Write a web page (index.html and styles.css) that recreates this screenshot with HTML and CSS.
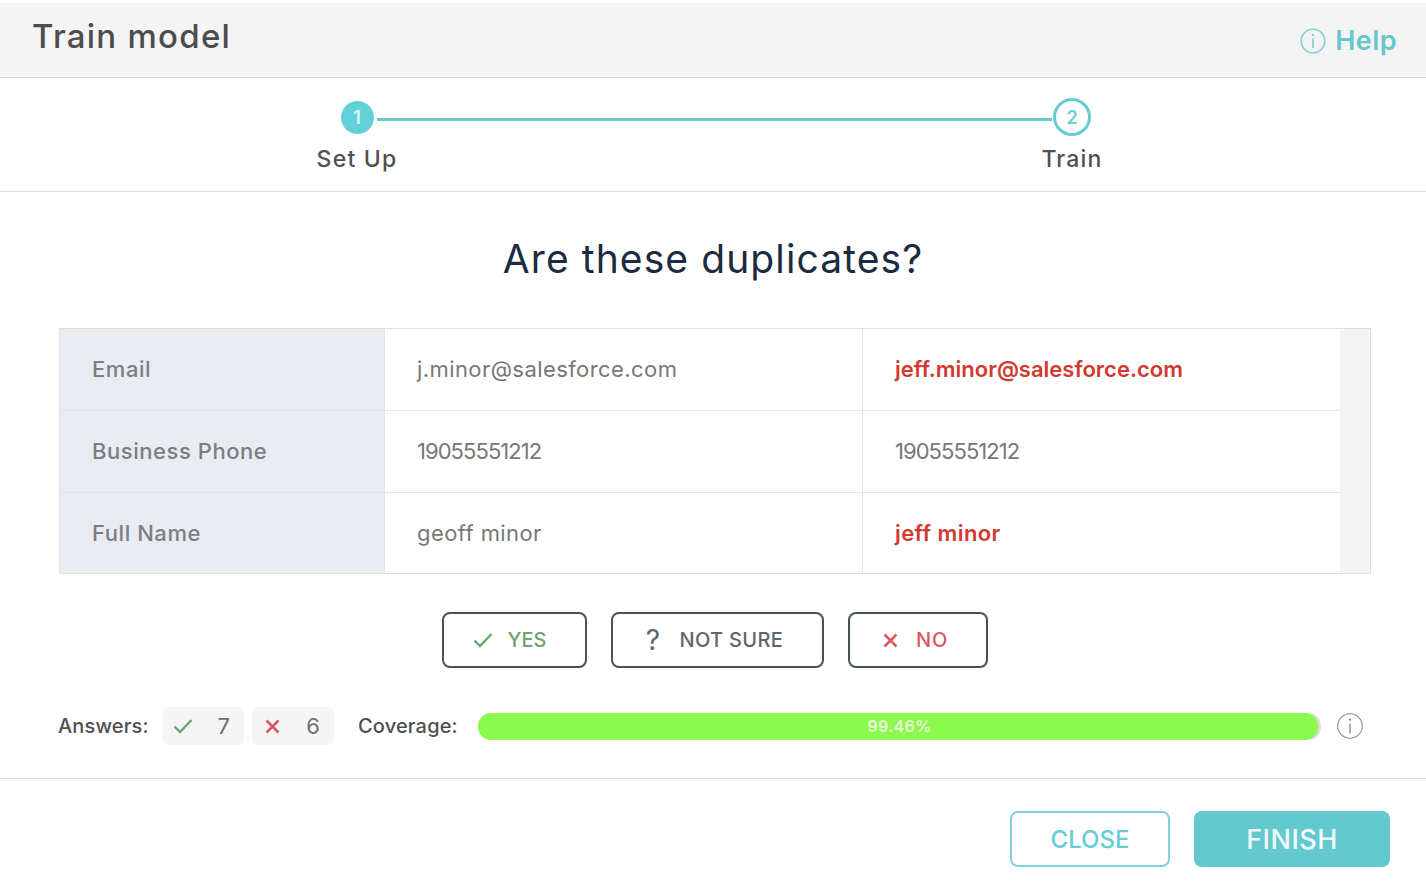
FILE: index.html
```html
<!DOCTYPE html>
<html lang="en">
<head>
<meta charset="utf-8">
<title>Train model</title>
<link rel="stylesheet" href="styles.css">
</head>
<body>
<div class="dialog">
  <header class="header">
    <h1 class="title">Train model</h1>
    <a class="help">
      <svg class="help-icon" viewBox="0 0 26 26" width="26" height="26" fill="none" stroke="#85d2d8" stroke-width="1.6"><circle cx="13" cy="13" r="11.8"/><path d="M13 10.5v9.5" stroke-width="1.8"/><circle cx="13" cy="7" r="1.3" fill="#85d2d8" stroke="none"/></svg>
      <span>Help</span>
    </a>
  </header>
  <section class="stepper">
    <div class="step">
      <div class="dot dot-done">1</div>
      <div class="step-label">Set Up</div>
    </div>
    <div class="step-line"></div>
    <div class="step">
      <div class="dot dot-current">2</div>
      <div class="step-label">Train</div>
    </div>
  </section>
  <h2 class="question">Are these duplicates?</h2>
  <section class="compare">
    <div class="cell head">Email</div>
    <div class="cell">j.minor@salesforce.com</div>
    <div class="cell diff tight">jeff.minor@salesforce.com</div>
    <div class="cell head">Business Phone</div>
    <div class="cell digits">19055551212</div>
    <div class="cell digits">19055551212</div>
    <div class="cell head last">Full Name</div>
    <div class="cell last">geoff minor</div>
    <div class="cell diff last">jeff minor</div>
  </section>
  <section class="choices">
    <button class="choice choice-yes">
      <svg viewBox="0 0 20 16" width="20" height="16" fill="none" stroke="#6ba56f" stroke-width="2.4"><path d="M1.5 8.5l5.5 5.5L18.5 2"/></svg>
      <span>YES</span>
    </button>
    <button class="choice choice-unsure">
      <span class="q-mark">?</span>
      <span>NOT SURE</span>
    </button>
    <button class="choice choice-no">
      <svg viewBox="0 0 15 15" width="15" height="15" fill="none" stroke="#d9595b" stroke-width="2.5"><path d="M1.5 1.5l12 12M13.5 1.5l-12 12"/></svg>
      <span>NO</span>
    </button>
  </section>
  <section class="stats">
    <span class="stat-label">Answers:</span>
    <div class="chip">
      <svg viewBox="0 0 20 16" width="20" height="16" fill="none" stroke="#6ba56f" stroke-width="2.4"><path d="M1.5 8.5l5.5 5.5L18.5 2"/></svg>
      <span>7</span>
    </div>
    <div class="chip chip-no">
      <svg viewBox="0 0 15 15" width="15" height="15" fill="none" stroke="#d9595b" stroke-width="2.6"><path d="M1.5 1.5l12 12M13.5 1.5l-12 12"/></svg>
      <span>6</span>
    </div>
    <span class="stat-label coverage-label">Coverage:</span>
    <div class="bar"><div class="bar-fill" style="width:99.65%">99.46%</div></div>
    <svg class="bar-info" viewBox="0 0 26 26" width="26" height="26" fill="none" stroke="#8e8e8e" stroke-width="1.1"><circle cx="13" cy="13" r="12.3"/><path d="M13 10.5v10" stroke="#6f6f6f"/><circle cx="13" cy="6.8" r="1" fill="#6f6f6f" stroke="none"/></svg>
  </section>
  <footer class="footer">
    <button class="action action-close">CLOSE</button>
    <button class="action action-finish">FINISH</button>
  </footer>
</div>
</body>
</html>
```
FILE: styles.css
```css
* { box-sizing: border-box; }
html, body { margin: 0; padding: 0; background: #fff; }
body { font-family: Inter, "Noto Sans", "Liberation Sans", sans-serif; width: 1426px; height: 894px; overflow: hidden; }
.dialog { display: flex; flex-direction: column; padding-top: 3px; }

.header { height: 75px; background: #f4f4f4; border-bottom: 1px solid #d9d9d9; display: flex; align-items: flex-start; justify-content: space-between; padding: 0 29px 0 32px; }
.title { margin: 14px 0 0; font-size: 33px; line-height: 38px; font-weight: 500; color: #4c4c4c; letter-spacing: 1.25px; }
.help { display: flex; align-items: center; gap: 9px; margin-top: 23px; font-size: 27px; line-height: 30px; font-weight: 600; color: #66c7cf; letter-spacing: 0.45px; }
.help-icon { display: block; }

.stepper { height: 114px; border-bottom: 1px solid #dcdcdc; display: flex; align-items: flex-start; padding: 0 294px 0 297px; }
.step { width: 120px; display: flex; flex-direction: column; align-items: center; padding-top: 20px; flex: none; }
.dot { width: 38px; height: 38px; border-radius: 50%; display: flex; align-items: center; justify-content: center; font-size: 18px; font-weight: 600; }
.dot-done { width: 33px; height: 33px; margin: 3px 0 2px; background: #62d0d8; color: #d8f5f7; }
.dot-current { border: 3px solid #68cbd3; color: #72ccd4; background: #fff; }
.step-label { margin-top: 9px; font-size: 23px; line-height: 28px; font-weight: 500; color: #505050; letter-spacing: 1.2px; }
.step-line { flex: 1; height: 3px; background: #68cbd3; margin: 40px -40px 0; }

.question { margin: 43px 0 0; text-align: center; font-size: 39px; line-height: 48px; font-weight: 400; color: #1c2b3f; letter-spacing: 1.1px; height: 93px; }

.compare { margin: 0 55px 0 59px; height: 246px; display: grid; grid-template-columns: 324px 478px 478px; grid-template-rows: 82px 82px 80px; border: 1px solid #dedede; border-left-color: #e3e3e3; padding-right: 30px; background-color: #fff; background-image: linear-gradient(#f4f4f4, #f4f4f4); background-size: 30px 100%; background-position: right top; background-repeat: no-repeat; width: 1312px; }
.cell { display: flex; align-items: center; padding: 0 0 2px 32px; font-size: 22px; font-weight: 400; color: #777; border-bottom: 1px solid #e6e6e6; border-left: 1px solid #e4e4e4; letter-spacing: 0.42px; }
.cell.last { border-bottom: 0; padding-bottom: 0; }
.head { background: #e9ecf0; font-weight: 500; color: #7a7f86; border-left: 0; border-bottom-color: #e0e3e7; border-right: 0; letter-spacing: 0.55px; }
.diff { color: #d23a2f; font-weight: 600; letter-spacing: 0.4px; }
.tight { letter-spacing: 0px; }
.digits { letter-spacing: -0.95px; }

.choices { display: flex; justify-content: center; gap: 24px; margin-top: 38px; padding-left: 4px; }
.choice { height: 56px; background: #fff; border: 2px solid #46525f; border-radius: 8px; display: flex; align-items: center; justify-content: center; gap: 15px; font-family: inherit; font-size: 20px; font-weight: 500; padding: 0; }
.choice-yes { width: 145px; color: #6ba56f; padding-right: 10px; }
.choice-unsure { width: 213px; color: #5f666e; gap: 19px; padding-right: 6px; letter-spacing: 0.35px; }
.choice-no { width: 140px; color: #d9595b; gap: 18px; padding-right: 5px; letter-spacing: 0.8px; }
.q-mark { font-size: 28px; font-weight: 400; }

.stats { display: flex; align-items: center; margin-top: 39px; padding-left: 58px; height: 38px; }
.stat-label { font-size: 20px; font-weight: 500; color: #4f4f4f; letter-spacing: 0.15px; width: 105px; flex: none; }
.chip { width: 81px; height: 38px; margin-right: 8px; background: #f5f5f5; border-radius: 6px; display: flex; align-items: center; justify-content: space-between; padding: 0 14px 0 10px; font-size: 22px; color: #6f6f6f; flex: none; }
.chip-no { width: 82px; padding-left: 13px; }
.coverage-label { margin-left: 16px; width: 120px; }
.bar { width: 843px; height: 27px; border-radius: 13px; background: #dcdcdc; flex: none; overflow: hidden; }
.bar-fill { height: 100%; background: #8cf94e; border-radius: 13px; color: #e7fbd8; font-size: 16px; font-weight: 600; line-height: 27px; text-align: center; letter-spacing: 0.35px; padding-left: 3px; }
.bar-info { margin-left: 16px; flex: none; }

.footer { margin-top: 33px; border-top: 1px solid #dfdfdf; height: 116px; display: flex; justify-content: flex-end; align-items: flex-start; gap: 24px; padding: 32px 36px 0 0; }
.action { height: 56px; border-radius: 8px; font-family: inherit; font-weight: 500; padding: 0; }
.action-close { width: 160px; background: #fff; border: 2px solid #80d1d8; color: #66cdd5; font-size: 24px; }
.action-finish { width: 196px; background: #63c9cf; border: 0; color: #f0fbfb; font-size: 27px; letter-spacing: 0.5px; }
```
